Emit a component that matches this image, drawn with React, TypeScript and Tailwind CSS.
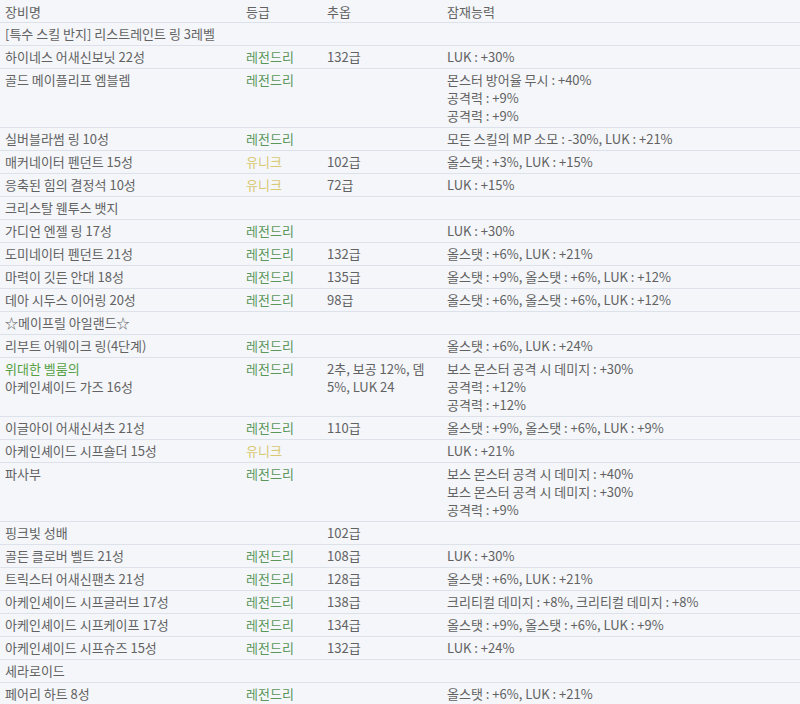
import React from "react";

type Grade = "L" | "U" | "";
type Row = { name: React.ReactNode; grade: Grade; add?: React.ReactNode; pot?: string[] };

const rows: Row[] = [
  { name: "[특수 스킬 반지] 리스트레인트 링 3레벨", grade: "" },
  { name: "하이네스 어새신보닛 22성", grade: "L", add: "132급", pot: ["LUK : +30%"] },
  { name: "골드 메이플리프 엠블렘", grade: "L", pot: ["몬스터 방어율 무시 : +40%", "공격력 : +9%", "공격력 : +9%"] },
  { name: "실버블라썸 링 10성", grade: "L", pot: ["모든 스킬의 MP 소모 : -30%, LUK : +21%"] },
  { name: "매커네이터 펜던트 15성", grade: "U", add: "102급", pot: ["올스탯 : +3%, LUK : +15%"] },
  { name: "응축된 힘의 결정석 10성", grade: "U", add: "72급", pot: ["LUK : +15%"] },
  { name: "크리스탈 웬투스 뱃지", grade: "" },
  { name: "가디언 엔젤 링 17성", grade: "L", pot: ["LUK : +30%"] },
  { name: "도미네이터 펜던트 21성", grade: "L", add: "132급", pot: ["올스탯 : +6%, LUK : +21%"] },
  { name: "마력이 깃든 안대 18성", grade: "L", add: "135급", pot: ["올스탯 : +9%, 올스탯 : +6%, LUK : +12%"] },
  { name: "데아 시두스 이어링 20성", grade: "L", add: "98급", pot: ["올스탯 : +6%, 올스탯 : +6%, LUK : +12%"] },
  { name: "☆메이프릴 아일랜드☆", grade: "" },
  { name: "리부트 어웨이크 링(4단계)", grade: "L", pot: ["올스탯 : +6%, LUK : +24%"] },
  {
    name: (
      <>
        <span className="text-[#55a043]">위대한 벨룸의</span>
        <br />
        아케인셰이드 가즈 16성
      </>
    ),
    grade: "L",
    add: (
      <>
        2추, 보공 12%, 뎀
        <br />
        5%, LUK 24
      </>
    ),
    pot: ["보스 몬스터 공격 시 데미지 : +30%", "공격력 : +12%", "공격력 : +12%"],
  },
  { name: "이글아이 어새신셔츠 21성", grade: "L", add: "110급", pot: ["올스탯 : +9%, 올스탯 : +6%, LUK : +9%"] },
  { name: "아케인셰이드 시프숄더 15성", grade: "U", pot: ["LUK : +21%"] },
  { name: "파사부", grade: "L", pot: ["보스 몬스터 공격 시 데미지 : +40%", "보스 몬스터 공격 시 데미지 : +30%", "공격력 : +9%"] },
  { name: "핑크빛 성배", grade: "", add: "102급" },
  { name: "골든 클로버 벨트 21성", grade: "L", add: "108급", pot: ["LUK : +30%"] },
  { name: "트릭스터 어새신팬츠 21성", grade: "L", add: "128급", pot: ["올스탯 : +6%, LUK : +21%"] },
  { name: "아케인셰이드 시프글러브 17성", grade: "L", add: "138급", pot: ["크리티컬 데미지 : +8%, 크리티컬 데미지 : +8%"] },
  { name: "아케인셰이드 시프케이프 17성", grade: "L", add: "134급", pot: ["올스탯 : +9%, 올스탯 : +6%, LUK : +9%"] },
  { name: "아케인셰이드 시프슈즈 15성", grade: "L", add: "132급", pot: ["LUK : +24%"] },
  { name: "세라로이드", grade: "" },
  { name: "페어리 하트 8성", grade: "L", pot: ["올스탯 : +6%, LUK : +21%"] },
];

export default function App() {
  return (
    <div
      className="w-[800px] h-[704px] overflow-hidden bg-[#f4f6fa] text-[13px] leading-[18px] text-[#626262]"
      style={{ fontFamily: '"Noto Sans CJK KR", "Noto Sans", sans-serif' }}
    >
      <table className="w-full border-collapse table-fixed">
        <colgroup>
          <col className="w-[241px]" />
          <col className="w-[81px]" />
          <col className="w-[120px]" />
          <col />
        </colgroup>
        <thead>
          <tr className="border-b border-[#dde2ea]">
            <th className="text-left font-normal px-[5px] pt-[3px] pb-[1px] align-top">장비명</th>
            <th className="text-left font-normal px-[5px] pt-[3px] pb-[1px] align-top">등급</th>
            <th className="text-left font-normal px-[5px] pt-[3px] pb-[1px] align-top">추옵</th>
            <th className="text-left font-normal px-[5px] pt-[3px] pb-[1px] align-top">잠재능력</th>
          </tr>
        </thead>
        <tbody>
          {rows.map((r, i) => (
            <tr key={i} className="border-b border-[#dde2ea]">
              <td className="px-[5px] py-[2px] align-top whitespace-nowrap">{r.name}</td>
              <td
                className={
                  "px-[5px] py-[2px] align-top " +
                  (r.grade === "L" ? "text-[#5b975a]" : r.grade === "U" ? "text-[#d9c870]" : "")
                }
              >
                {r.grade === "L" ? "레전드리" : r.grade === "U" ? "유니크" : ""}
              </td>
              <td className="px-[5px] py-[2px] align-top whitespace-nowrap">{r.add}</td>
              <td className="px-[5px] py-[2px] align-top whitespace-nowrap">
                {r.pot ? r.pot.map((p, j) => <div key={j}>{p}</div>) : <div>&nbsp;</div>}
              </td>
            </tr>
          ))}
        </tbody>
      </table>
    </div>
  );
}
